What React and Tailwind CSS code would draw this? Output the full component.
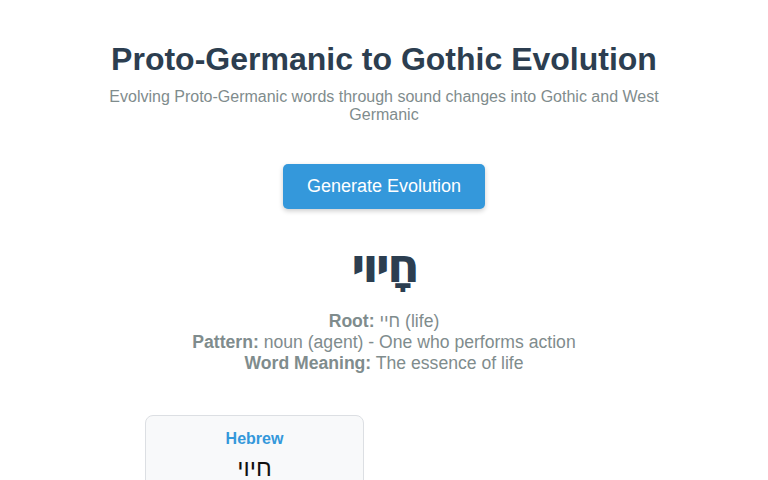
export default function App() {
  return (
    <div className="min-h-screen bg-white font-['Liberation_Sans',Arial,sans-serif]">
      <div className="mx-auto max-w-[600px] px-5 pt-[38px] text-center">
        <h1 className="text-[32px] font-bold leading-[42px] text-[#2c3e50]">
          Proto-Germanic to Gothic Evolution
        </h1>
        <p className="mt-[8px] text-[16px] leading-[18px] text-[#7f8c8d]">
          Evolving Proto-Germanic words through sound changes into Gothic and West Germanic
        </p>

        <button className="mt-[40px] h-[45px] w-[202px] rounded-[5px] bg-[#3498db] text-[18px] text-white shadow-[0_2px_5px_rgba(0,0,0,0.2)]">
          Generate Evolution
        </button>

        <div className="mt-[25px] font-['DejaVu_Sans',sans-serif] text-[48px] font-bold leading-[62px] tracking-[-3px] text-[#2c3e50]" dir="rtl">
          חָיוי
        </div>

        <div className="mt-[15px] text-[17.6px] leading-[21px] text-[#7f8c8d]">
          <div><span className="font-bold">Root:</span> חיי (life)</div>
          <div><span className="font-bold">Pattern:</span> noun (agent) - One who performs action</div>
          <div><span className="font-bold">Word Meaning:</span> The essence of life</div>
        </div>

        <div className="mt-[41px] flex pl-[41px]">
          <div className="h-[120px] w-[219px] rounded-[8px] border border-[#dcdfe3] bg-[#f8f9fa] pt-[13px]">
            <div className="text-[16px] font-bold leading-[20px] text-[#3498db]">Hebrew</div>
            <div className="mt-[4px] text-[24px] leading-[30px] text-[#111]" dir="rtl">
              חיוי
            </div>
          </div>
        </div>
      </div>
    </div>
  );
}
